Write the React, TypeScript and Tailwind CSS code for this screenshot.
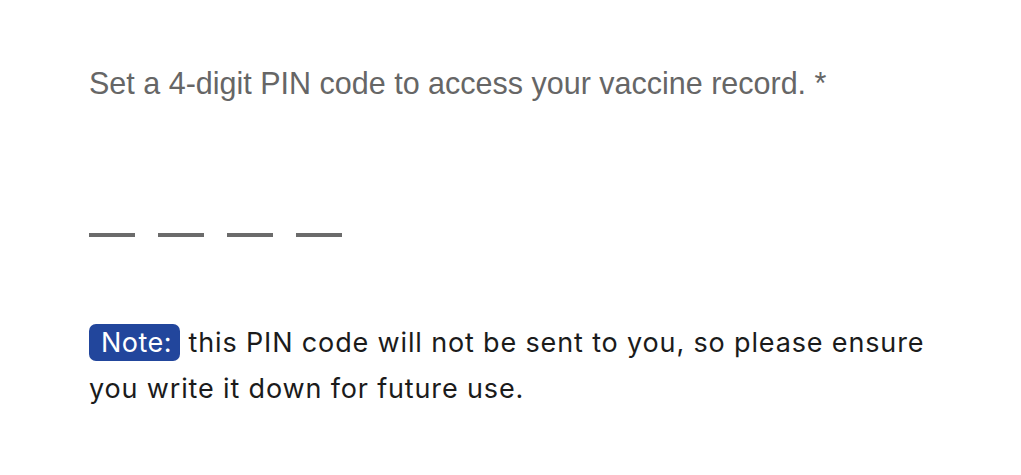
export default function App() {
  return (
    <div className="min-h-screen bg-white pl-[89px] pr-[80px] pt-[65px]">
      <label className="block text-[30.5px] leading-[37px] text-[#666666] font-['Liberation_Sans',Arial,sans-serif]">
        Set a 4-digit PIN code to access your vaccine record. *
      </label>

      {/* PIN digit slots */}
      <div className="mt-[131px] flex gap-[23px]">
        {[0, 1, 2, 3].map((i) => (
          <div key={i} className="h-[4px] w-[46px] bg-[#6b6b6b]" />
        ))}
      </div>

      <p className="mt-[83px] max-w-[850px] text-[27px] leading-[46px] tracking-[0.85px] text-[#1b1b1b] font-['Inter','Noto_Sans',sans-serif]">
        <span className="rounded-[7px] bg-[#22469c] py-[2px] pl-[12px] pr-[8px] tracking-[0.5px] text-white">Note:</span>{" "}
        this PIN code will not be sent to you, so please ensure you write it down for future use.
      </p>
    </div>
  );
}
